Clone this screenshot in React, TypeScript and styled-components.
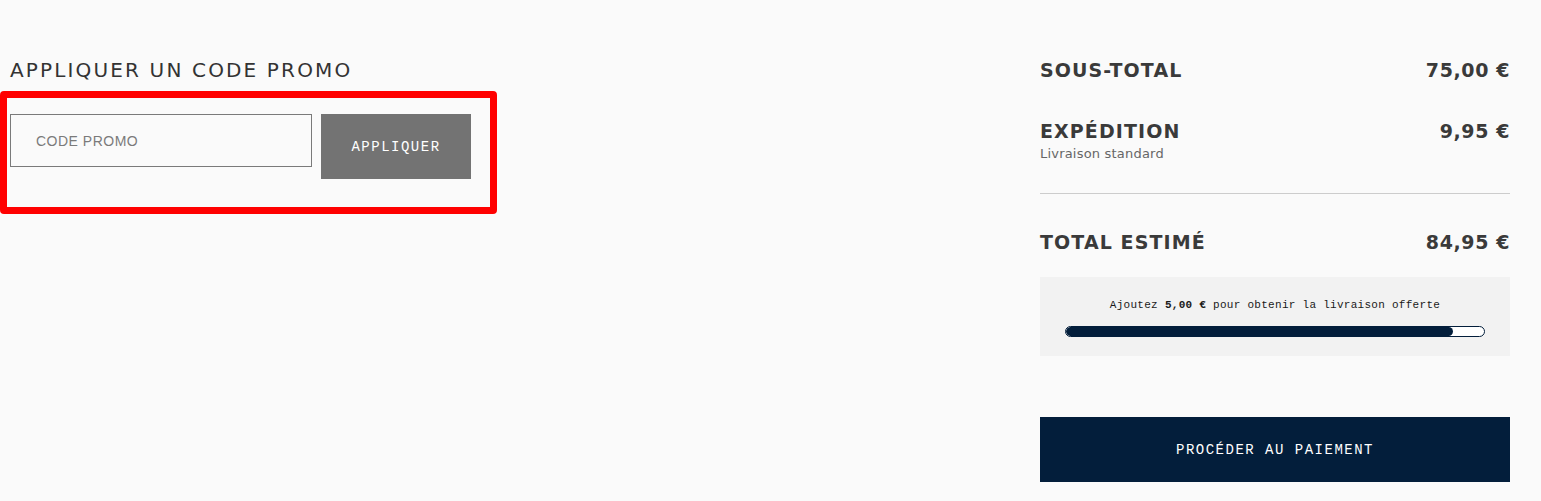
import React from 'react';
import styled, { createGlobalStyle } from 'styled-components';

const GlobalStyle = createGlobalStyle`
    html, body {
        margin: 0;
        padding: 0;
        background: #fafafa;
    }
    body {
        font-family: "DejaVu Sans", "Liberation Sans", Arial, sans-serif;
        color: #333333;
    }
    * { box-sizing: border-box; }
`;

// --- Layout ---
const Page = styled.div`
    display: flex;
    justify-content: space-between;
    align-items: flex-start;
    padding: 58px 31px 0 0;
    min-height: 501px;
`;

// --- Left column (promo) ---
const PromoColumn = styled.div`
    display: flex;
    flex-direction: column;
`;

const PromoTitle = styled.h3`
    margin: 0 0 9px 10px;
    font-size: 20px;
    line-height: 24px;
    font-weight: 400;
    letter-spacing: 2.15px;
    text-transform: uppercase;
    color: #333333;
`;

const Highlight = styled.div`
    border: 7px solid #ff0000;
    border-radius: 4px;
    padding: 16px 19px 28px 3px;
    width: fit-content;
`;

const PromoForm = styled.form`
    display: flex;
    align-items: flex-start;
    gap: 9px;
`;

const PromoInput = styled.input`
    width: 302px;
    height: 53px;
    border: 1px solid #7a7a7a;
    background: #fafafa;
    padding: 0 25px;
    font-family: "Liberation Sans", Arial, sans-serif;
    font-size: 14px;
    letter-spacing: 0.5px;
    color: #333;
    outline: none;

    &::placeholder {
        color: #7a7a7a;
        text-transform: uppercase;
    }
`;

const MonoButton = styled.button<{ $variant: 'grey' | 'navy' }>`
    border: none;
    cursor: pointer;
    font-family: "Liberation Mono", "DejaVu Sans Mono", monospace;
    font-size: 14px;
    letter-spacing: 1.5px;
    text-transform: uppercase;
    color: #ffffff;
    height: 65px;
    background: ${p => p.$variant === 'navy' ? '#031e3b' : '#737373'};
    width: ${p => p.$variant === 'navy' ? '100%' : '150px'};
    padding: 0;
`;

// --- Right column (summary) ---
const Summary = styled.aside`
    width: 470px;
    display: flex;
    flex-direction: column;
`;

const SummaryRow = styled.div<{ $gap?: number }>`
    display: flex;
    justify-content: space-between;
    align-items: baseline;
    margin-top: ${p => p.$gap ?? 0}px;
    font-size: 19px;
    line-height: 24px;
    font-weight: 700;
    color: #3a3a3a;
    text-transform: uppercase;
`;

const RowLabel = styled.span`
    letter-spacing: 1.1px;
`;

const RowValue = styled.span`
    letter-spacing: 0.6px;
`;

const SubNote = styled.div`
    margin-top: 3px;
    font-size: 13px;
    line-height: 16px;
    letter-spacing: 0.2px;
    color: #666666;
`;

const Divider = styled.hr`
    margin: 31px 0 0;
    border: none;
    border-top: 1px solid #cccccc;
    height: 0;
`;

const ShippingBox = styled.div`
    margin-top: 23px;
    background: #f2f2f2;
    padding: 21px 25px 19px;
    display: flex;
    flex-direction: column;
    align-items: stretch;
`;

const ShippingText = styled.p`
    margin: 0;
    text-align: center;
    font-family: "Liberation Mono", "DejaVu Sans Mono", monospace;
    font-size: 11px;
    line-height: 14px;
    letter-spacing: 0.28px;
    color: #1a1a1a;

    strong { font-weight: 700; }
`;

const Track = styled.div`
    margin-top: 14px;
    height: 11px;
    border: 1px solid #031e3b;
    border-radius: 6px;
    background: #ffffff;
    overflow: hidden;
`;

const Fill = styled.div`
    height: 100%;
    background: #031e3b;
    border-radius: 6px;
`;

const CheckoutWrap = styled.div`
    margin-top: 61px;
`;

const SUBTOTAL = 75;
const SHIPPING = 9.95;
const FREE_SHIPPING_AT = 80;

const euro = (n: number) => n.toFixed(2).replace('.', ',') + ' €';

const App: React.FC = () => {
    const progress = Math.min(SUBTOTAL / FREE_SHIPPING_AT, 1) * 98.8;
    const remaining = FREE_SHIPPING_AT - SUBTOTAL;

    return (
        <>
            <GlobalStyle />
            <Page>
                <PromoColumn>
                    <PromoTitle>Appliquer un code promo</PromoTitle>
                    <Highlight>
                        <PromoForm onSubmit={(e) => e.preventDefault()}>
                            <PromoInput placeholder="Code promo" />
                            <MonoButton $variant="grey" type="submit">Appliquer</MonoButton>
                        </PromoForm>
                    </Highlight>
                </PromoColumn>

                <Summary>
                    <SummaryRow>
                        <RowLabel>Sous-total</RowLabel>
                        <RowValue>{euro(SUBTOTAL)}</RowValue>
                    </SummaryRow>
                    <SummaryRow $gap={37}>
                        <RowLabel>Expédition</RowLabel>
                        <RowValue>{euro(SHIPPING)}</RowValue>
                    </SummaryRow>
                    <SubNote>Livraison standard</SubNote>
                    <Divider />
                    <SummaryRow $gap={36}>
                        <RowLabel>Total estimé</RowLabel>
                        <RowValue>{euro(SUBTOTAL + SHIPPING)}</RowValue>
                    </SummaryRow>

                    <ShippingBox>
                        <ShippingText>
                            Ajoutez <strong>{euro(remaining)}</strong> pour obtenir la livraison offerte
                        </ShippingText>
                        <Track>
                            <Fill style={{ width: `${progress}%` }} />
                        </Track>
                    </ShippingBox>

                    <CheckoutWrap>
                        <MonoButton $variant="navy" type="button">Procéder au paiement</MonoButton>
                    </CheckoutWrap>
                </Summary>
            </Page>
        </>
    );
};

export default App;
